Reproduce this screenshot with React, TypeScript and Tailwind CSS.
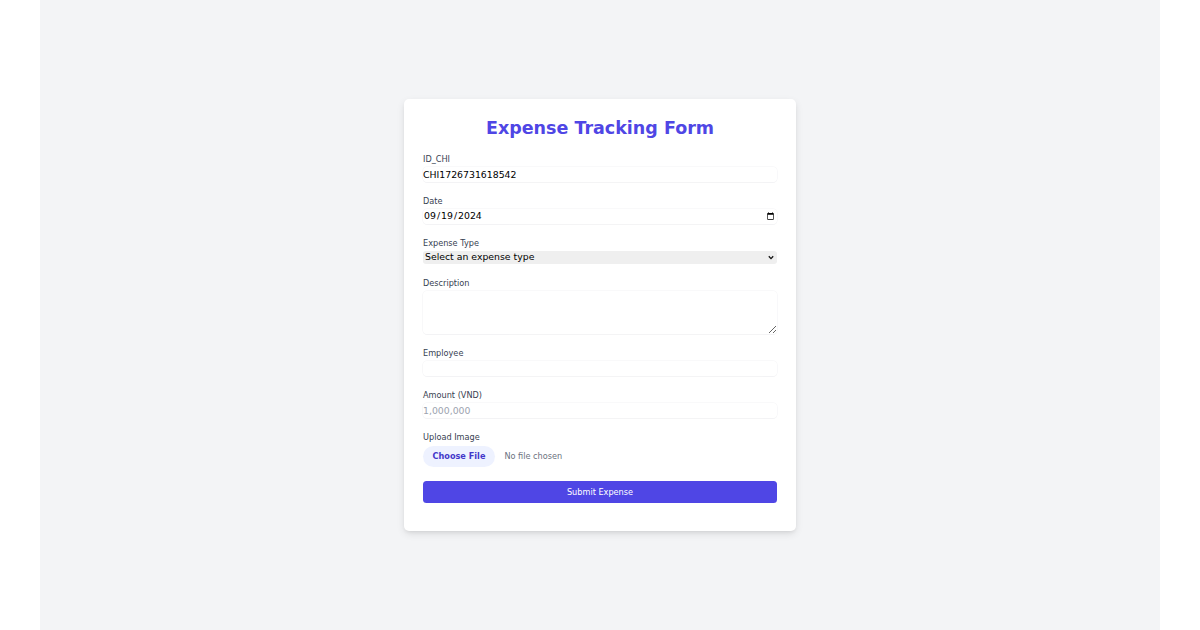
import React from "react";

const labelCls = "block text-[8.17px] leading-[12px] text-[#374151]";
const boxCls =
  "mt-[2px] block w-full bg-white border-0 shadow-[0_0_0_0.6px_#f4f4f6,0_0.8px_0_0_#f0f0f2] rounded-[4px] outline-none p-0 text-[9.33px] leading-[14px] text-black";
const inputCls = boxCls + " h-[15px]";

export default function App() {
  return (
    <div className="min-h-[630px] bg-white font-['DejaVu_Sans',sans-serif]">
      <div className="mx-10 min-h-[630px] bg-[#f3f4f6] flex items-center justify-center">
        <div className="w-[392px] bg-white rounded-[5px] shadow-[0_3px_8px_-1px_rgba(0,0,0,0.12),0_2px_4px_-2px_rgba(0,0,0,0.1)] px-[19px] pt-[19px] pb-[28px]">
          <h1 className="text-[17.5px] leading-[21px] font-bold text-center text-[#4f46e5] mb-[14px]">
            Expense Tracking Form
          </h1>
          <form className="flex flex-col" onSubmit={(e) => e.preventDefault()}>
            <div className="mb-[13px]">
              <label className={labelCls}>ID_CHI</label>
              <input className={inputCls} defaultValue="CHI1726731618542" />
            </div>
            <div className="mb-[13px]">
              <label className={labelCls}>Date</label>
              <input type="date" className={inputCls} defaultValue="2024-09-19" />
            </div>
            <div className="mb-[13px]">
              <label className={labelCls}>Expense Type</label>
              <div className="relative mt-[2px]">
                <select className="appearance-none block w-full h-[13px] text-[9.33px] leading-[12px] text-black bg-[#efefef] rounded-[3px] border-0 outline-none py-0 pl-[2px]">
                  <option>Select an expense type</option>
                </select>
                <svg
                  className="absolute right-[3px] top-[4px] w-[6px] h-[5px] pointer-events-none"
                  viewBox="0 0 6 5"
                  fill="none"
                >
                  <path d="M0.8 1.2 L3 3.6 L5.2 1.2" stroke="#111" strokeWidth="1.3" />
                </svg>
              </div>
            </div>
            <div className="mb-[13px]">
              <label className={labelCls}>Description</label>
              <textarea className={boxCls + " h-[43px]"} />
            </div>
            <div className="mb-[13px]">
              <label className={labelCls}>Employee</label>
              <input className={inputCls} />
            </div>
            <div className="mb-[13px]">
              <label className={labelCls}>Amount (VND)</label>
              <input className={inputCls + " placeholder:text-[#9ca3af]"} placeholder="1,000,000" />
            </div>
            <div className="mb-[14px]">
              <label className={labelCls}>Upload Image</label>
              <div className="mt-[3px] flex items-center">
                <span className="h-[21px] px-[9.5px] rounded-full bg-[#eef2ff] text-[#4338ca] font-bold text-[8.17px] leading-[21px]">
                  Choose File
                </span>
                <span className="ml-[9.5px] text-[8.17px] leading-[12px] text-[#6b7280]">
                  No file chosen
                </span>
              </div>
            </div>
            <button
              type="submit"
              className="w-full h-[22.5px] rounded-[3.5px] bg-[#4f46e5] text-white text-[8.17px] leading-[12px]"
            >
              Submit Expense
            </button>
          </form>
        </div>
      </div>
    </div>
  );
}
